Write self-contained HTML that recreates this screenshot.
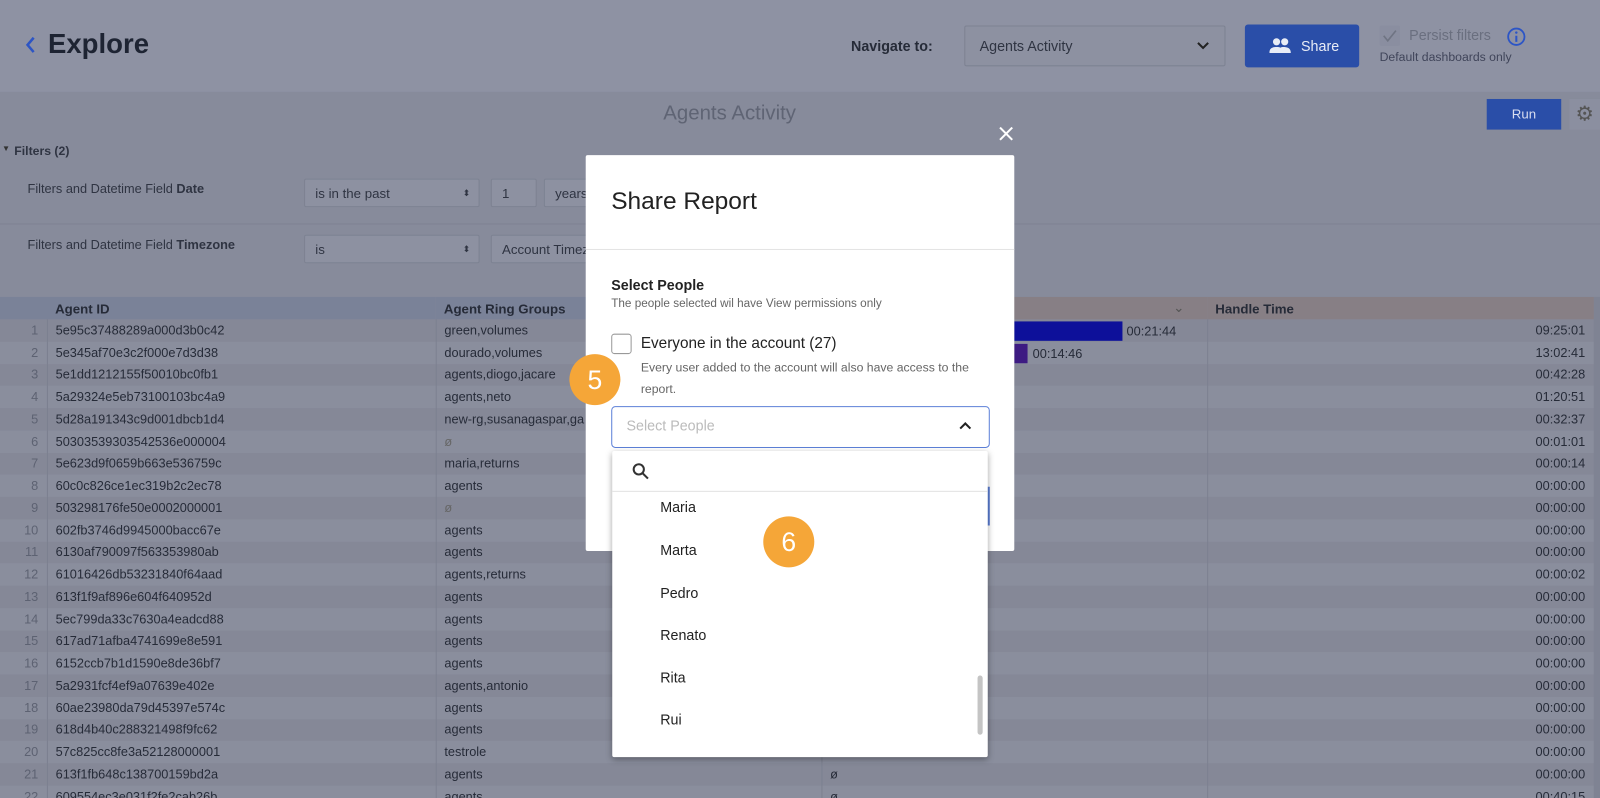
<!DOCTYPE html>
<html><head><meta charset="utf-8"><style>
*{box-sizing:border-box;margin:0;padding:0}
html,body{width:1600px;height:798px;overflow:hidden;background:#878b9b}
#w{position:absolute;left:0;top:0;width:1568px;height:782px;transform:scale(1.020408);transform-origin:0 0;font-family:"Liberation Sans",sans-serif;color:#262b38;background:#878b9b;overflow:hidden}
.a{position:absolute;white-space:nowrap}
.hdr{left:0;top:0;width:1568px;height:90px;background:#8e92a3}
.sel{position:absolute;border:1px solid #7d8292;background:#8d91a1;border-radius:2px;font-size:13px;color:#2f3442;padding-left:10px;line-height:27px}
table{position:absolute;left:0;top:291px;border-collapse:collapse;font-size:12.5px;color:#262b38}
td{height:21.75px;padding:0 8px;border-right:1px solid #7c8090;white-space:nowrap}
tr:nth-child(odd) td{background:#8a8e9d}
tr:nth-child(even) td{background:#858897}
td.n{width:46px;text-align:right;color:#5d6272;padding-right:8px}
td.r{text-align:right}
th{height:22px;text-align:left;padding:0 8px;font-size:13px;background:#7a8298;color:#262b38}
.mi{position:absolute;left:47px;font-size:14px;color:#222}
.circ{position:absolute;width:50px;height:50px;border-radius:50%;background:#f5a638;color:#fff;font-size:26px;text-align:center;line-height:50px}
</style></head><body><div id="w">
<div class="a hdr"></div>
<svg class="a" style="left:24px;top:35px" width="12" height="18"><path d="M9 2L3 9l6 7" stroke="#2d55c4" stroke-width="2.5" fill="none"/></svg>
<div class="a" style="left:47px;top:28px;font-size:27px;font-weight:bold;color:#1e2433">Explore</div>
<div class="a" style="left:834px;top:37px;font-size:14px;font-weight:bold">Navigate to:</div>
<div class="sel" style="left:945px;top:25px;width:256px;height:40px;line-height:38px;font-size:14px;padding-left:14px">Agents Activity
<svg style="position:absolute;right:14px;top:14px" width="14" height="10"><path d="M2 2l5 5 5-5" stroke="#222" stroke-width="2" fill="none"/></svg></div>
<div class="a" style="left:1220px;top:24px;width:112px;height:42px;background:#2a4ea8;border-radius:3px;color:#e8ecf6;font-size:14px;line-height:42px;padding-left:55px">Share</div>
<svg class="a" style="left:1244px;top:37px" width="22" height="16"><circle cx="7" cy="4" r="3.5" fill="#e8ecf6"/><circle cx="15" cy="4" r="3.5" fill="#e8ecf6"/><path d="M0 15c0-5 3-6 7-6s7 1 7 6zM10 15c1-4 0-6 3-6 5 0 8 1 8 6z" fill="#e8ecf6"/></svg>
<div class="a" style="left:1352px;top:25px;width:20px;height:20px;background:#8a8ea0;border-radius:2px"></div>
<svg class="a" style="left:1354px;top:28px" width="16" height="14"><path d="M2 7l4 5 8-10" stroke="#6f7483" stroke-width="1.6" fill="none"/></svg>
<div class="a" style="left:1381px;top:26px;font-size:14px;color:#6a6f7f">Persist filters</div>
<svg class="a" style="left:1476px;top:26px" width="20" height="20"><circle cx="10" cy="10" r="8" stroke="#2c55c6" stroke-width="1.8" fill="none"/><path d="M10 9v6" stroke="#2c55c6" stroke-width="2"/><circle cx="10" cy="6" r="1.2" fill="#2c55c6"/></svg>
<div class="a" style="left:1352px;top:49px;font-size:12px;color:#40455a">Default dashboards only</div>
<div class="a" style="left:650px;top:100px;font-size:20px;color:#5f6474">Agents Activity</div>
<div class="a" style="left:1457px;top:97px;width:73px;height:30px;background:#2a4ea8;color:#d9def0;font-size:13px;text-align:center;line-height:30px">Run</div>
<div class="a" style="left:1538px;top:97px;width:30px;height:30px;background:#8b8fa0;color:#555;font-size:20px;line-height:30px;text-align:center">⚙</div>
<div class="a" style="left:2px;top:141px;font-size:8px;color:#333">▼</div>
<div class="a" style="left:14px;top:141px;font-size:12px;font-weight:bold;color:#2f3442">Filters (2)</div>
<div class="a" style="left:27px;top:178px;font-size:12.5px;color:#2f3442">Filters and Datetime Field <b>Date</b></div>
<div class="sel" style="left:298px;top:175px;width:172px;height:28px">is in the past<span style="position:absolute;right:8px;font-size:9px">⬍</span></div>
<div class="sel" style="left:481px;top:175px;width:45px;height:28px">1</div>
<div class="sel" style="left:533px;top:175px;width:60px;height:28px">years</div>
<div class="a" style="left:0;top:219px;width:1568px;height:1px;background:#7f8393"></div>
<div class="a" style="left:27px;top:233px;font-size:12.5px;color:#2f3442">Filters and Datetime Field <b>Timezone</b></div>
<div class="sel" style="left:298px;top:230px;width:172px;height:28px">is<span style="position:absolute;right:8px;font-size:9px">⬍</span></div>
<div class="sel" style="left:481px;top:230px;width:110px;height:28px">Account Timez</div>
<table>
<tr><th style="width:46px"></th><th style="width:381px">Agent ID</th><th style="width:378px">Agent Ring Groups</th><th style="width:378px;background:#877f85;text-align:right;color:#555;font-weight:normal">⌄&nbsp;&nbsp;&nbsp;&nbsp;</th><th style="width:379px;background:#877f85">Handle Time</th></tr>
<tr><td class="n">1</td><td>5e95c37488289a000d3b0c42</td><td>green,volumes</td><td></td><td class="r">09:25:01</td></tr>
<tr><td class="n">2</td><td>5e345af70e3c2f000e7d3d38</td><td>dourado,volumes</td><td></td><td class="r">13:02:41</td></tr>
<tr><td class="n">3</td><td>5e1dd1212155f50010bc0fb1</td><td>agents,diogo,jacare</td><td></td><td class="r">00:42:28</td></tr>
<tr><td class="n">4</td><td>5a29324e5eb73100103bc4a9</td><td>agents,neto</td><td></td><td class="r">01:20:51</td></tr>
<tr><td class="n">5</td><td>5d28a191343c9d001dbcb1d4</td><td>new-rg,susanagaspar,ga</td><td></td><td class="r">00:32:37</td></tr>
<tr><td class="n">6</td><td>50303539303542536e000004</td><td style="color:#666">ø</td><td></td><td class="r">00:01:01</td></tr>
<tr><td class="n">7</td><td>5e623d9f0659b663e536759c</td><td>maria,returns</td><td></td><td class="r">00:00:14</td></tr>
<tr><td class="n">8</td><td>60c0c826ce1ec319b2c2ec78</td><td>agents</td><td></td><td class="r">00:00:00</td></tr>
<tr><td class="n">9</td><td>503298176fe50e0002000001</td><td style="color:#666">ø</td><td></td><td class="r">00:00:00</td></tr>
<tr><td class="n">10</td><td>602fb3746d9945000bacc67e</td><td>agents</td><td></td><td class="r">00:00:00</td></tr>
<tr><td class="n">11</td><td>6130af790097f563353980ab</td><td>agents</td><td></td><td class="r">00:00:00</td></tr>
<tr><td class="n">12</td><td>61016426db53231840f64aad</td><td>agents,returns</td><td></td><td class="r">00:00:02</td></tr>
<tr><td class="n">13</td><td>613f1f9af896e604f640952d</td><td>agents</td><td></td><td class="r">00:00:00</td></tr>
<tr><td class="n">14</td><td>5ec799da33c7630a4eadcd88</td><td>agents</td><td></td><td class="r">00:00:00</td></tr>
<tr><td class="n">15</td><td>617ad71afba4741699e8e591</td><td>agents</td><td></td><td class="r">00:00:00</td></tr>
<tr><td class="n">16</td><td>6152ccb7b1d1590e8de36bf7</td><td>agents</td><td></td><td class="r">00:00:00</td></tr>
<tr><td class="n">17</td><td>5a2931fcf4ef9a07639e402e</td><td>agents,antonio</td><td></td><td class="r">00:00:00</td></tr>
<tr><td class="n">18</td><td>60ae23980da79d45397e574c</td><td>agents</td><td></td><td class="r">00:00:00</td></tr>
<tr><td class="n">19</td><td>618d4b40c288321498f9fc62</td><td>agents</td><td></td><td class="r">00:00:00</td></tr>
<tr><td class="n">20</td><td>57c825cc8fe3a52128000001</td><td>testrole</td><td>ø</td><td class="r">00:00:00</td></tr>
<tr><td class="n">21</td><td>613f1fb648c138700159bd2a</td><td>agents</td><td>ø</td><td class="r">00:00:00</td></tr>
<tr><td class="n">22</td><td>609554ec3e031f2fe2cab26b</td><td>agents</td><td>ø</td><td class="r">00:40:15</td></tr>
</table>
<div class="a" style="left:994px;top:315px;width:106px;height:19px;background:#0d109a"></div>
<div class="a" style="left:1104px;top:318px;font-size:12.5px">00:21:44</div>
<div class="a" style="left:994px;top:337px;width:13px;height:19px;background:#3d1b82"></div>
<div class="a" style="left:1012px;top:340px;font-size:12.5px">00:14:46</div>
<div class="a" style="left:1562px;top:291px;width:6px;height:491px;background:#7f8393"></div>
<svg class="a" style="left:978px;top:123px" width="16" height="16"><path d="M2 2l12 12M14 2L2 14" stroke="#fff" stroke-width="2"/></svg>
<div class="a" style="left:574px;top:152px;width:420px;height:388px;background:#fff;border-radius:2px"></div>
<div class="a" style="left:599px;top:184px;font-size:24px;color:#222">Share Report</div>
<div class="a" style="left:574px;top:244px;width:420px;height:1px;background:#e4e4e4"></div>
<div class="a" style="left:599px;top:271px;font-size:14px;font-weight:bold;color:#222">Select People</div>
<div class="a" style="left:599px;top:292px;font-size:11.5px;color:#666">The people selected wil have View permissions only</div>
<div class="a" style="left:599px;top:327px;width:20px;height:20px;border:1.5px solid #999;border-radius:3px"></div>
<div class="a" style="left:628px;top:328px;font-size:15px;color:#222">Everyone in the account (27)</div>
<div class="a" style="left:628px;top:350px;font-size:12px;color:#666;line-height:21px;white-space:normal;width:340px">Every user added to the account will also have access to the report.</div>
<div class="a" style="left:599px;top:398px;width:371px;height:41px;border:1.5px solid #5d80d8;border-radius:4px"></div>
<div class="a" style="left:614px;top:409px;font-size:14px;color:#bbb">Select People</div>
<svg class="a" style="left:939px;top:412px" width="14" height="10"><path d="M2 8l5-5 5 5" stroke="#222" stroke-width="2" fill="none"/></svg>
<div class="a" style="left:967px;top:477px;width:3px;height:38px;background:#5d80d8"></div>
<div class="a" style="left:600px;top:442px;width:368px;height:300px;background:#fff;box-shadow:0 2px 6px rgba(0,0,0,.35);border-radius:2px"></div>
<svg class="a" style="left:619px;top:453px" width="18" height="18"><circle cx="7" cy="7" r="5" stroke="#333" stroke-width="2" fill="none"/><path d="M11 11l5 5" stroke="#333" stroke-width="2"/></svg>
<div class="a" style="left:600px;top:481px;width:368px;height:1px;background:#e2e2e2"></div>
<div class="mi" style="left:647px;top:489px">Maria</div>
<div class="mi" style="left:647px;top:531px">Marta</div>
<div class="mi" style="left:647px;top:573px">Pedro</div>
<div class="mi" style="left:647px;top:614px">Renato</div>
<div class="mi" style="left:647px;top:656px">Rita</div>
<div class="mi" style="left:647px;top:697px">Rui</div>
<div class="a" style="left:958px;top:662px;width:5px;height:58px;background:#c4c4c4;border-radius:3px"></div>
<div class="circ" style="left:558px;top:347px">5</div>
<div class="circ" style="left:748px;top:506px">6</div>
</div></body></html>
